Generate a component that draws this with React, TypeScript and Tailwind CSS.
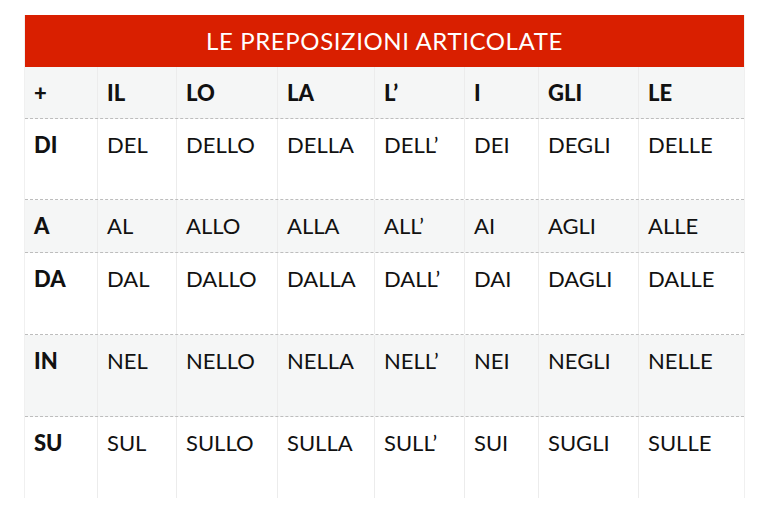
const cols = ["w-[73px]", "w-[79px]", "w-[101px]", "w-[97px]", "w-[90px]", "w-[74px]", "w-[100px]", "w-[106px]"];

const header = ["+", "IL", "LO", "LA", "L’", "I", "GLI", "LE"];

const rows = [
  { cells: ["DI", "DEL", "DELLO", "DELLA", "DELL’", "DEI", "DEGLI", "DELLE"], h: "h-[81px]", bg: "bg-white" },
  { cells: ["A", "AL", "ALLO", "ALLA", "ALL’", "AI", "AGLI", "ALLE"], h: "h-[53px]", bg: "bg-[#f5f6f6]" },
  { cells: ["DA", "DAL", "DALLO", "DALLA", "DALL’", "DAI", "DAGLI", "DALLE"], h: "h-[82px]", bg: "bg-white" },
  { cells: ["IN", "NEL", "NELLO", "NELLA", "NELL’", "NEI", "NEGLI", "NELLE"], h: "h-[82px]", bg: "bg-[#f5f6f6]" },
  { cells: ["SU", "SUL", "SULLO", "SULLA", "SULL’", "SUI", "SUGLI", "SULLE"], h: "h-[81px]", bg: "bg-white" },
];

function Row({ cells, h, bg, head, last }: { cells: string[]; h: string; bg: string; head?: boolean; last?: boolean }) {
  return (
    <div className={`flex ${h} ${bg} ${last ? "" : "border-b border-dashed border-[#bdbdbd]"}`}>
      {cells.map((c, i) => (
        <div
          key={i}
          className={`${cols[i]} shrink-0 pl-[9px] ${head ? "flex items-center" : "pt-[15px]"} leading-[22px] text-[22px] text-[#111] ${
            i < cells.length - 1 ? "border-r border-[#ececec]" : ""
          } ${head || i === 0 ? "font-black" : "font-normal"}`}
        >
          {c}
        </div>
      ))}
    </div>
  );
}

export default function App() {
  return (
    <div className="w-[768px] h-[511px] bg-white pt-[15px] pl-[24px]" style={{ fontFamily: "Lato, 'Noto Sans', sans-serif" }}>
      <div className="w-[721px] border-x border-[#f0f0f0]">
        <div className="h-[52px] bg-[#d91f00] flex items-center justify-center text-white text-[24px] tracking-[0.6px]">
          LE PREPOSIZIONI ARTICOLATE
        </div>
        <Row cells={header} h="h-[52px]" bg="bg-[#f5f6f6]" head />
        {rows.map((r, i) => (
          <Row key={i} cells={r.cells} h={r.h} bg={r.bg} last={i === rows.length - 1} />
        ))}
      </div>
    </div>
  );
}
